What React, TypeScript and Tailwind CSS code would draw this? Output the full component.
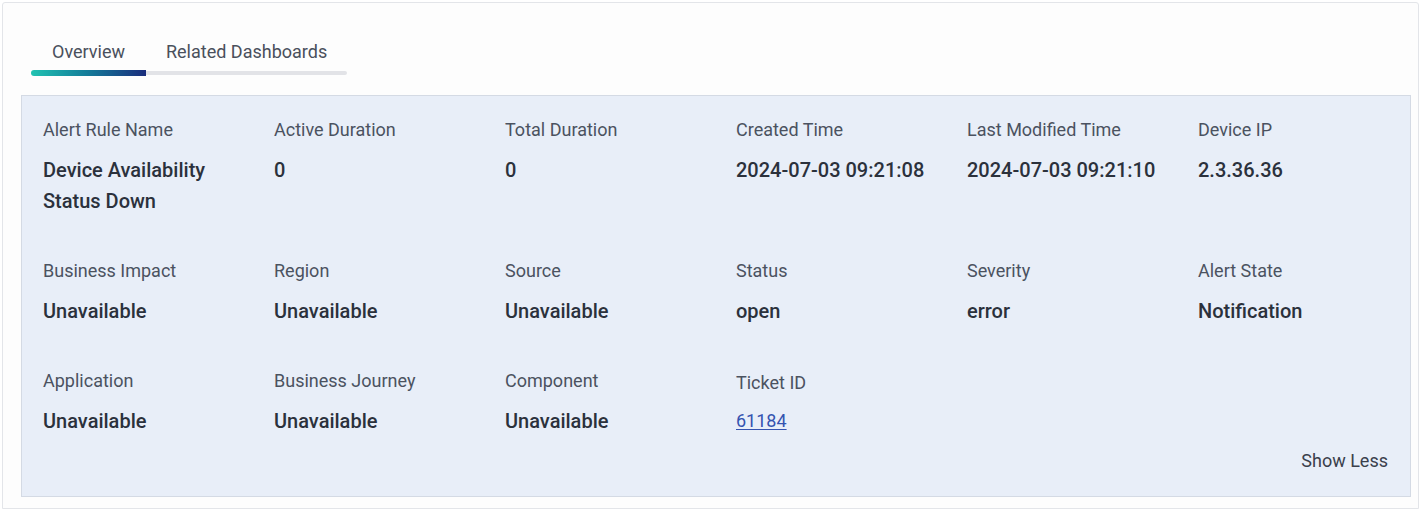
import React from "react";

type Field = {
  label: string;
  value: string;
  link?: boolean;
};

const fields: Field[] = [
  { label: "Alert Rule Name", value: "Device Availability Status Down" },
  { label: "Active Duration", value: "0" },
  { label: "Total Duration", value: "0" },
  { label: "Created Time", value: "2024-07-03 09:21:08" },
  { label: "Last Modified Time", value: "2024-07-03 09:21:10" },
  { label: "Device IP", value: "2.3.36.36" },
  { label: "Business Impact", value: "Unavailable" },
  { label: "Region", value: "Unavailable" },
  { label: "Source", value: "Unavailable" },
  { label: "Status", value: "open" },
  { label: "Severity", value: "error" },
  { label: "Alert State", value: "Notification" },
  { label: "Application", value: "Unavailable" },
  { label: "Business Journey", value: "Unavailable" },
  { label: "Component", value: "Unavailable" },
  { label: "Ticket ID", value: "61184", link: true }
];

function DetailField({ label, value, link }: Field) {
  if (link) {
    return (
      <div className="flex flex-col gap-[11px] pt-[2px]">
        <span className="text-[18px] leading-[24px] text-[#4b5260]">{label}</span>
        <a
          href="#"
          className="w-fit text-[18px] leading-[29px] text-[#3453b0] underline underline-offset-2"
        >
          {value}
        </a>
      </div>
    );
  }
  return (
    <div className="flex flex-col gap-[13px] pr-6">
      <span className="text-[18px] leading-[24px] text-[#4b5260]">{label}</span>
      <span className="text-[20px] font-medium leading-[31px] text-[#2b313c]">{value}</span>
    </div>
  );
}

export default function App() {
  return (
    <div
      className="min-h-[511px] bg-white pl-[2px] pt-[2px]"
      style={{ fontFamily: "Roboto, 'Liberation Sans', sans-serif" }}
    >
      <div className="w-[1417px] rounded-tl-[3px] rounded-tr-[3px] border border-[#e3e5e9] bg-[#fdfdfd] pb-[11px] pl-[18px] pr-[7px] pt-[37px]">
        <nav className="ml-[10px] flex w-fit">
          <div className="flex flex-col gap-[6px]">
            <span className="px-[21px] text-[18px] leading-[24px] text-[#4a505c]">Overview</span>
            <div className="h-[6px] rounded-l-full bg-gradient-to-r from-[#22c3b1] via-[#147a98] to-[#1a2c7c]" />
          </div>
          <div className="flex flex-col gap-[6px]">
            <span className="px-[20px] text-[18px] leading-[24px] text-[#4a505c]">
              Related Dashboards
            </span>
            <div className="mt-[1px] h-[4px] rounded-r-full bg-[#e2e3e7]" />
          </div>
        </nav>

        <section className="mt-[19px] border border-[#d4dae4] bg-[#e8eef8] pb-[23px] pl-[21px] pr-[22px] pt-[22px]">
          <div className="grid grid-cols-[repeat(6,231px)] gap-y-[42px]">
            {fields.map((f) => (
              <DetailField key={f.label} {...f} />
            ))}
          </div>
          <div className="mt-[12px] flex justify-end">
            <button className="text-[18px] leading-[24px] text-[#3a404c]">Show Less</button>
          </div>
        </section>
      </div>
    </div>
  );
}
